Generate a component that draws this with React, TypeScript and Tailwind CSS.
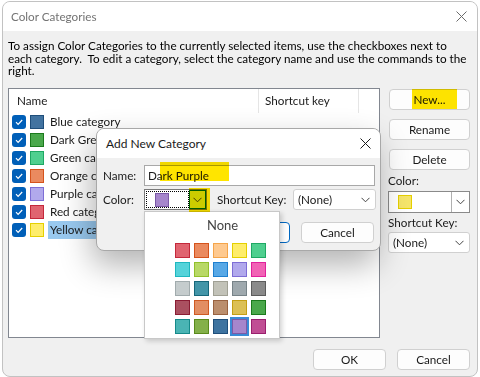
import React from 'react';

type Swatch = { fill: string; border: string };
type Category = Swatch & { name: string; selected?: boolean };

const categories: Category[] = [
  { name: 'Blue category', fill: '#4273a0', border: '#1f4e7a' },
  { name: 'Dark Green category', fill: '#4aa84b', border: '#1b7a1c' },
  { name: 'Green category', fill: '#4fcf8f', border: '#1fa864' },
  { name: 'Orange category', fill: '#ea8a5f', border: '#d5531c' },
  { name: 'Purple category', fill: '#b1a9ec', border: '#7e6ed5' },
  { name: 'Red category', fill: '#e06470', border: '#c4283b' },
  { name: 'Yellow category', fill: '#feed6b', border: '#e5d000', selected: true },
];

const palette: Swatch[][] = [
  [
    { fill: '#e06470', border: '#c4283b' },
    { fill: '#ea8a5f', border: '#d5531c' },
    { fill: '#fec98f', border: '#f5a54a' },
    { fill: '#feed6b', border: '#e5d000' },
    { fill: '#4fcf8f', border: '#1fa864' },
  ],
  [
    { fill: '#55d3da', border: '#1fb7bf' },
    { fill: '#b8d866', border: '#92c02c' },
    { fill: '#58a8e6', border: '#1f7fcf' },
    { fill: '#b1a9ec', border: '#7e6ed5' },
    { fill: '#f163b5', border: '#e0219c' },
  ],
  [
    { fill: '#c5cccd', border: '#a1abad' },
    { fill: '#4295a8', border: '#16677a' },
    { fill: '#c2c2b8', border: '#a0a094' },
    { fill: '#9fa9ae', border: '#778388' },
    { fill: '#8a8a8a', border: '#5c5c5c' },
  ],
  [
    { fill: '#aa5060', border: '#8a1c33' },
    { fill: '#e28e63', border: '#cf5a22' },
    { fill: '#bb8e6d', border: '#996240' },
    { fill: '#dcc055', border: '#c49f15' },
    { fill: '#4aa84b', border: '#1b7a1c' },
  ],
  [
    { fill: '#4ab4b4', border: '#158a8a' },
    { fill: '#84b04a', border: '#5a8a1b' },
    { fill: '#3e73a0', border: '#1f4e7a' },
    { fill: '#a686cc', border: '#7b5aa6' },
    { fill: '#c04e94', border: '#9a1f6e' },
  ],
];

function Check() {
  return (
    <span className="flex h-[14px] w-[14px] shrink-0 items-center justify-center rounded-[3px] bg-[#005fb8]">
      <svg width="10" height="10" viewBox="0 0 10 10">
        <path d="M2 5.2 L4.1 7.3 L8.2 3" fill="none" stroke="#fff" strokeWidth="1.2" />
      </svg>
    </span>
  );
}

function Chevron() {
  return (
    <svg width="9" height="6" viewBox="0 0 9 6">
      <path d="M0.5 0.8 L4.5 4.8 L8.5 0.8" fill="none" stroke="#444" strokeWidth="1" />
    </svg>
  );
}

function CloseX({ color }: { color: string }) {
  return (
    <svg width="11" height="11" viewBox="0 0 11 11">
      <path d="M0.5 0.5 L10.5 10.5 M10.5 0.5 L0.5 10.5" fill="none" stroke={color} strokeWidth="1" />
    </svg>
  );
}

function Button({ label, className }: { label: string; className?: string }) {
  return (
    <div
      className={`flex h-[21px] items-center justify-center rounded-[4px] border border-[#d0d0d0] bg-[#fdfdfd] text-[#1a1a1a] ${className ?? ''}`}
    >
      {label}
    </div>
  );
}

export default function App() {
  return (
    <div className="relative h-[377px] w-[480px] overflow-hidden bg-white font-['Lato',sans-serif] text-[11.7px] text-[#1a1a1a]">
      {/* main window */}
      <div className="absolute top-[1px] left-[2px] h-[376px] w-[476px] overflow-hidden rounded-[8px] border border-[#c2c2c2] bg-[#f0f0f0]">
        <div className="flex h-[29px] items-center justify-between bg-white pr-[10px] pl-[8px]">
          <span className="text-[#737373]">Color Categories</span>
          <CloseX color="#6b6b6b" />
        </div>

        <div className="pl-[5px]">
          <div className="h-[57px] pt-[8px] leading-[12.5px] whitespace-nowrap text-black">
            <div>To assign Color Categories to the currently selected items, use the checkboxes next to</div>
            <div>each category.&nbsp; To edit a category, select the category name and use the commands to the</div>
            <div>right.</div>
          </div>

          <div className="flex gap-[8px]">
            {/* list */}
            <div className="h-[250px] w-[372px] border border-[#828790] bg-white">
              <div className="flex h-[24px] items-center">
                <div className="flex h-full w-[250px] items-center border-r border-[#e5e5e5] pl-[8px]">Name</div>
                <div className="flex h-full w-[100px] items-center border-r border-[#e5e5e5] pl-[6px]">Shortcut key</div>
              </div>
              {categories.map((c) => (
                <div key={c.name} className="flex h-[18px] items-center pl-[3px]">
                  <Check />
                  <span
                    className="ml-[4px] h-[14px] w-[14px] shrink-0 border"
                    style={{ backgroundColor: c.fill, borderColor: c.border }}
                  />
                  <span className={`ml-[4px] flex h-[18px] items-center px-[2px] ${c.selected ? 'bg-[#99c9ef]' : ''}`}>
                    {c.name}
                  </span>
                </div>
              ))}
            </div>

            {/* right column */}
            <div className="flex w-[82px] flex-col">
              <div className="relative mt-[1px] ml-[1px] w-[81px]">
                <Button label="New..." className="w-[81px]" />
                <div className="absolute top-0 left-[23px] h-[20px] w-[45px] bg-[#ffe500] mix-blend-multiply" />
              </div>
              <Button label="Rename" className="mt-[9px] ml-[1px] w-[81px]" />
              <Button label="Delete" className="mt-[9px] ml-[1px] w-[81px]" />
              <div className="flex h-[21px] items-center">Color:</div>
              <div className="flex h-[22px] items-center border border-[#8a8a8a] bg-white">
                <span className="ml-[9px] h-[14px] w-[14px] border border-[#e5cf00] bg-[#f5e56b]" />
                <span className="ml-auto flex h-full w-[18px] items-center justify-center border-l border-[#b0b0b0]">
                  <Chevron />
                </span>
              </div>
              <div className="flex h-[19px] items-center">Shortcut Key:</div>
              <div className="flex h-[21px] items-center justify-between rounded-[3px] border border-[#d0d0d0] bg-white pr-[5px] pl-[4px]">
                <span>(None)</span>
                <Chevron />
              </div>
            </div>
          </div>

          <div className="mt-[11px] flex justify-end gap-[11px] pr-[7px]">
            <Button label="OK" className="w-[73px]" />
            <Button label="Cancel" className="w-[73px]" />
          </div>
        </div>
      </div>

      {/* Add New Category dialog */}
      <div className="absolute top-[128px] left-[96px] h-[123px] w-[285px] overflow-hidden rounded-[8px] border border-[#a8a8a8] bg-[#f0f0f0] shadow-[-4px_14px_32px_rgba(0,0,0,0.3)]">
        <div className="flex h-[29px] items-center justify-between bg-white pr-[9px] pl-[9px]">
          <span className="text-[12px] text-[#1a1a1a]">Add New Category</span>
          <CloseX color="#1a1a1a" />
        </div>
        <div className="pt-[7px] pl-[6px]">
          <div className="flex items-center">
            <span className="w-[41px]">Name:</span>
            <div className="flex h-[21px] w-[231px] items-center border border-[#a8a8a8] bg-white pl-[3px]">Dark Purple</div>
          </div>
          <div className="mt-[3px] flex items-center">
            <span className="w-[41px]">Color:</span>
            <div className="flex h-[21px] w-[63px] items-center border border-[#7a7a7a] bg-white">
              <div className="ml-[1px] flex h-[17px] w-[44px] items-center border border-dotted border-black pl-[8px]">
                <span className="h-[14px] w-[14px] border border-[#7b5aa6] bg-[#a686cc]" />
              </div>
              <span className="ml-auto flex h-full w-[17px] items-center justify-center border border-[#0067c0] bg-[#cce4f7]">
                <Chevron />
              </span>
            </div>
            <span className="ml-[10px] w-[76px]">Shortcut Key:</span>
            <div className="flex h-[21px] w-[83px] items-center justify-between rounded-[3px] border border-[#d0d0d0] bg-white pr-[5px] pl-[4px]">
              <span>(None)</span>
              <Chevron />
            </div>
          </div>
          <div className="mt-[12px] flex justify-end gap-[11px] pr-[6px]">
            <div className="h-[21px] w-[73px] rounded-[4px] border border-[#0067c0] bg-[#fdfdfd]" />
            <Button label="Cancel" className="w-[73px]" />
          </div>
        </div>
      </div>

      {/* color picker popup */}
      <div className="absolute top-[211px] left-[144px] h-[128px] w-[136px] border border-[#c8c8c8] bg-white shadow-[2px_2px_5px_rgba(0,0,0,0.18)]">
        <div className="h-[26px] pl-[62px] text-[13px] leading-[26px] text-[#444]">None</div>
        <div className="mt-[5px] flex flex-col gap-[4px] pl-[30px]">
          {palette.map((row, r) => (
            <div key={r} className="flex gap-[4px]">
              {row.map((s, i) => (
                <span
                  key={i}
                  className={`h-[15px] w-[15px] border ${r === 4 && i === 3 ? 'outline-2 outline-[#3a8ad6]' : ''}`}
                  style={{ backgroundColor: s.fill, borderColor: s.border }}
                />
              ))}
            </div>
          ))}
        </div>
      </div>

      {/* highlighter marks */}
      <div className="absolute top-[162px] left-[160px] h-[19px] w-[69px] bg-[#ffe500] mix-blend-multiply" />
      <div className="absolute top-[188px] left-[189px] h-[24px] w-[21px] bg-[#ffe500] mix-blend-multiply" />
    </div>
  );
}
